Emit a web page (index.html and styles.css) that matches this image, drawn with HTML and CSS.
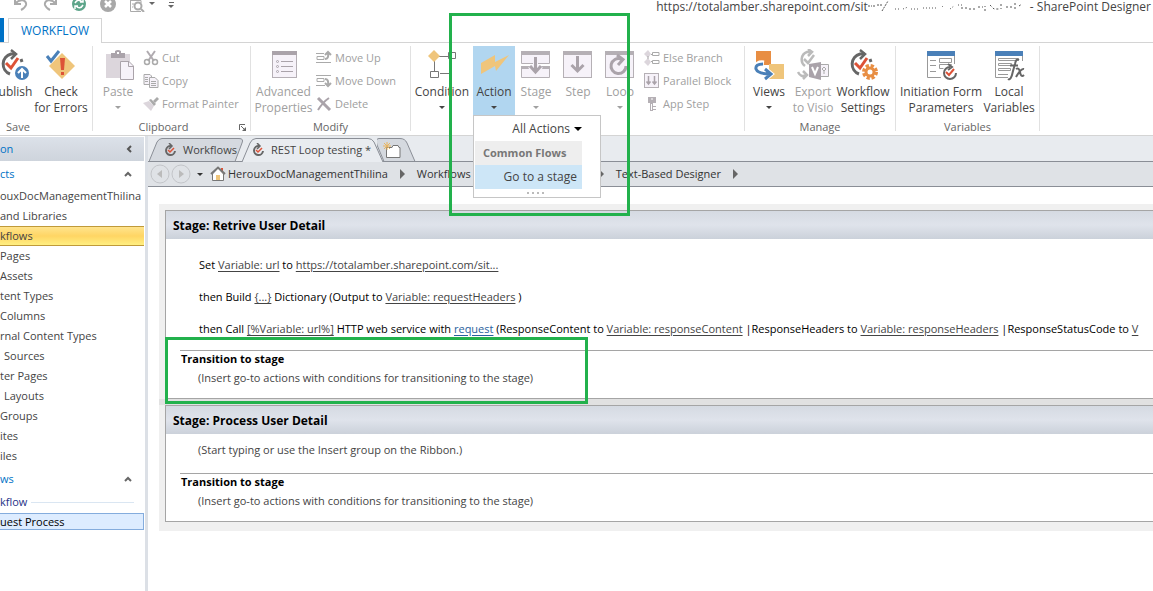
FILE: index.html
```html
<!DOCTYPE html>
<html lang="en">

<head>
  <meta charset="UTF-8">
  <meta name="viewport" content="width=device-width, initial-scale=1.0">
  <title>SharePoint Designer</title>
  <link rel="stylesheet" href="styles.css">
</head>

<body>
  <!-- shared symbols -->
  <svg class="symbols" width="0" height="0" aria-hidden="true">
    <symbol id="cycle" viewBox="0 0 30 30">
      <path d="M10 25A10.500 10.500 0 0 1 11 5H16" fill="none" stroke="currentColor" stroke-width="3" />
      <path d="M11 1L16 5L11 10" fill="none" stroke="currentColor" stroke-width="2.500" />
      <path d="M21 10L22 13" fill="none" stroke="currentColor" stroke-width="3" />
      <path class="tick" d="M6 14L11 19L18 9" fill="none" stroke-width="3" />
    </symbol>
    <symbol id="cycle-small" viewBox="0 0 13 14">
      <path d="M7 3A4.500 4.500 0 1 0 11 8" fill="none" stroke="#666" stroke-width="2" />
      <path d="M5 0L8 3L5 6" fill="none" stroke="#666" stroke-width="1.500" />
      <path d="M4 7L6 9L10 5" fill="none" stroke="#dd5237" stroke-width="1.500" />
    </symbol>
  </svg>

  <header class="titlebar">
    <div class="quick-access">
      <button aria-label="Undo"><svg width="16" height="16" viewBox="0 0 16 16"><path d="M2 3V8H8M2 8C7 2 14 4 13 9Q12 12 8 14" fill="none" stroke="#aaa" stroke-width="2" /></svg></button>
      <button aria-label="Redo"><svg width="16" height="16" viewBox="0 0 16 16"><path d="M14 3V8H8M14 8C9 2 2 4 3 9Q4 12 8 14" fill="none" stroke="#aaa" stroke-width="2" /></svg></button>
      <button aria-label="Refresh"><svg width="16" height="16" viewBox="0 0 16 16"><circle cx="8" cy="8" r="7" fill="#5da58a" /><path d="M4 7Q7 2 11 6M12 3V6H9M12 9Q9 14 5 10M4 13V10H7" fill="none" stroke="#fff" stroke-width="1.500" /></svg></button>
      <button aria-label="Stop"><svg width="16" height="16" viewBox="0 0 16 16"><circle cx="8" cy="8" r="8" fill="#a8a8a8" /><path d="M5 5L11 11M11 5L5 11" stroke="#fff" stroke-width="2.500" /></svg></button>
      <button aria-label="Preview"><svg width="26" height="16" viewBox="0 0 26 16"><path d="M1.500 0V15.500H12M1 4.500H12V7" fill="none" stroke="#aaa" /><circle cx="9" cy="10" r="3.500" fill="#fff" stroke="#aaa" stroke-width="2" /><path d="M12 13L15 16" stroke="#aaa" stroke-width="2" /><path d="M3 8H5M3 11H4" stroke="#aaa" /><path d="M20 6H26L23 9Z" fill="#666" /></svg></button>
      <button aria-label="Customize"><svg width="7" height="16" viewBox="0 0 7 16"><path d="M1 6.500H6" stroke="#666" /><path d="M0 9H6L3 12Z" fill="#666" /></svg></button>
    </div>
    <div class="window-title">
      <span>https://totalamber.sharepoint.com/sit</span>
      <svg width="162" height="14" viewBox="0 0 162 14" fill="none" stroke="#555"><path d="M0 6H4M6 5V8M9 5H14M14 11L20 1" stroke-dasharray="2 1" /><path d="M27 9H32M35 9L40 7M43 9H52M55 8H68M74 6L76 8M82 9L86 6M90 5H95" stroke-dasharray="1 2" /><path d="M93 8H99M101 9H107M110 7H115M117 11V6M122 5L126 9H131M133 4V9M138 7H144M147 3V9M151 6L154 4" stroke-dasharray="2 2" /></svg>
      <span>- SharePoint Designer</span>
    </div>
  </header>

  <nav class="ribbon-tabs">
    <span class="file-tab"></span>
    <a class="ribbon-tab" href="#">WORKFLOW</a>
  </nav>

  <section class="ribbon">
    <div class="group group-save">
      <div class="tools">
        <button class="large publish">
          <svg width="32" height="32" viewBox="0 0 32 32"><use href="#cycle" width="30" height="30" /><circle cx="22" cy="24" r="7" fill="#4a80b8" /><path d="M22 29V20M18 24L22 20L26 24" fill="none" stroke="#fff" stroke-width="2" /></svg>
          <span>ublish</span>
        </button>
        <button class="large check">
          <svg width="32" height="32" viewBox="0 0 32 32"><path d="M17 4L30 17L17 30L4 17Z" fill="#efc57b" /><path d="M2 7L6 12L14 2" fill="none" stroke="#4a80b8" stroke-width="3" /><path d="M15 9H20L19 21H16Z" fill="#dd5237" /><rect x="16" y="23" width="3" height="3" fill="#dd5237" /></svg>
          <span>Check<br>for Errors</span>
        </button>
      </div>
      <div class="group-name">Save</div>
    </div>

    <div class="group group-clipboard">
      <div class="tools">
        <button class="large paste" disabled>
          <svg width="32" height="32" viewBox="0 0 32 32"><path d="M4 5H28V29H4Z" fill="#dcd6dc" /><path d="M9 4H13V2Q16 0 19 2V4H23V9H9Z" fill="#aaa3aa" /><rect x="15" y="3" width="2" height="2" fill="#fff" /><path d="M18.500 12.500H27L31.500 17V30.500H18.500Z" fill="#f6f2f9" stroke="#aaa3aa" /><path d="M26.500 12.500V17.500H31.500" fill="none" stroke="#aaa3aa" /></svg>
          <span>Paste</span><i class="arrow"></i>
        </button>
        <div class="stack">
          <button class="small" disabled><svg width="16" height="16" viewBox="0 0 16 16"><path d="M4 1L11 11M12 1L5 11" stroke="#b0abb0" stroke-width="2" /><circle cx="4" cy="12" r="2.500" fill="none" stroke="#aaa" stroke-width="1.500" /><circle cx="12" cy="12" r="2.500" fill="none" stroke="#aaa" stroke-width="1.500" /></svg>Cut</button>
          <button class="small" disabled><svg width="16" height="16" viewBox="0 0 16 16"><path d="M1 1.500H7L8.500 3V11.500H1Z" fill="#f6f2f9" stroke="#aaa" /><path d="M6.500 4.500H12L15 7.500V14.500H6.500Z" fill="#f6f2f9" stroke="#aaa" /><path d="M2 4.500H5M2 6.500H5M2 8.500H5M8 8.500H13M8 10.500H13M8 12.500H13" stroke="#aaa" /></svg>Copy</button>
          <button class="small" disabled><svg width="16" height="16" viewBox="0 0 16 16"><path d="M0 7L6 5L11 10L8 15Z" fill="#dcd6dc" /><path d="M6 4L8 3L13 8L11 10Z" fill="#aaa" /><path d="M10 5L14 1L16 3L12 7Z" fill="#aaa" /></svg>Format Painter</button>
        </div>
      </div>
      <div class="group-name">Clipboard</div>
      <button class="launcher" aria-label="Clipboard options"><svg width="7" height="7" viewBox="0 0 7 7"><path d="M0.500 6V0.500H6M2 2L5 5" fill="none" stroke="#666" /><path d="M7 3V7H3Z" fill="#666" /></svg></button>
    </div>

    <div class="group group-modify">
      <div class="tools">
        <button class="large advanced" disabled>
          <svg width="32" height="32" viewBox="0 0 32 32"><rect x="4.500" y="2.500" width="24" height="26" fill="#f6f2f9" stroke="#b5afb5" /><path d="M4 2H29V6H4Z" fill="#aaa3aa" /><path d="M13 12.500H25M13 17.500H25M13 22.500H25" stroke="#aaa3aa" /><g fill="none" stroke="#aaa3aa"><circle cx="9.500" cy="12.500" r="1" /><circle cx="9.500" cy="17.500" r="1" /><circle cx="9.500" cy="22.500" r="1" /></g></svg>
          <span>Advanced<br>Properties</span>
        </button>
        <div class="stack">
          <button class="small" disabled><svg width="16" height="16" viewBox="0 0 16 16"><path d="M0 3.500H8M0 12.500H15M1 6.500H8V9.500H1Z" fill="none" stroke="#aaa" /><path d="M9 9Q13 9 12 3M9 5L12 2L15 5" fill="none" stroke="#aaa" stroke-width="2" /></svg>Move Up</button>
          <button class="small" disabled><svg width="16" height="16" viewBox="0 0 16 16"><path d="M0 2.500H15M0 12.500H9M1 5.500H8V8.500H1Z" fill="none" stroke="#aaa" /><path d="M9 6Q13 6 12 12M9 10L12 13L15 10" fill="none" stroke="#aaa" stroke-width="2" /></svg>Move Down</button>
          <button class="small" disabled><svg width="16" height="16" viewBox="0 0 16 16"><path d="M2 2L14 14" stroke="#aaa3aa" stroke-width="3" /><path d="M13 2Q7 6 2 14" fill="none" stroke="#aaa3aa" stroke-width="2" /></svg>Delete</button>
        </div>
      </div>
      <div class="group-name">Modify</div>
    </div>

    <div class="group group-insert">
      <div class="tools">
        <button class="large condition">
          <svg width="32" height="32" viewBox="0 0 32 32"><path d="M8.500 7V22M8 7.500H24M25.500 10V29M14 24.500H25" fill="none" stroke="#777" /><path d="M8 1L14 7L8 13L2 7Z" fill="#efc57b" /><path d="M22.500 3.500H29.500V9.500H22.500ZM4.500 22.500H12.500V28.500H4.500Z" fill="#fff" stroke="#777" /></svg>
          <span>Condition</span><i class="arrow"></i>
        </button>
        <div class="dropdown">
          <button class="large action active">
            <svg width="32" height="32" viewBox="0 0 32 32"><path d="M3 14L17 6V13L31 6L18 22L17 17L3 25Z" fill="#efc57b" /></svg>
            <span>Action</span><i class="arrow"></i>
          </button>
          <div class="menu">
            <button class="menu-all">All Actions <i class="arrow"></i></button>
            <div class="menu-heading">Common Flows</div>
            <button class="menu-item">Go to a stage</button>
            <svg class="grip" width="18" height="2" viewBox="0 0 18 2"><path d="M0 1H2M5 1H7M10 1H12M15 1H17" stroke="#bbb" stroke-width="2" /></svg>
          </div>
        </div>
        <button class="large block" disabled>
          <svg width="32" height="32" viewBox="0 0 32 32"><path d="M1.500 2.500H29.500V14.500H1.500ZM1.500 17.500H29.500V28.500H1.500Z" fill="#f6f2f9" stroke="#b5b0b5" /><path d="M1 2H30V6H1ZM1 17H30V20H1Z" fill="#b5b0b5" /><path d="M15.500 8V23M10 17L15.500 23L21 17" fill="none" stroke="#f6f2f9" stroke-width="5" /><path d="M15.500 8V23M10 17L15.500 23L21 17" fill="none" stroke="#aaa3aa" stroke-width="3" /></svg>
          <span>Stage</span><i class="arrow"></i>
        </button>
        <button class="large block" disabled>
          <svg width="32" height="32" viewBox="0 0 32 32"><rect x="1.500" y="2.500" width="28" height="26" fill="#f6f2f9" stroke="#b5b0b5" /><path d="M1 2H30V6H1Z" fill="#b5b0b5" /><path d="M15.500 7V22M9.500 16L15.500 22L21.500 16" fill="none" stroke="#aaa3aa" stroke-width="3" /></svg>
          <span>Step</span>
        </button>
        <button class="large block" disabled>
          <svg width="32" height="32" viewBox="0 0 32 32"><rect x="1.500" y="2.500" width="28" height="26" fill="#f6f2f9" stroke="#b5b0b5" /><path d="M1 2H30V6H1Z" fill="#b5b0b5" /><path d="M17 10A7.500 7.500 0 1 0 22 17M13 6L19 10.500L14 16" fill="none" stroke="#aaa3aa" stroke-width="3" /></svg>
          <span>Loop</span><i class="arrow"></i>
        </button>
        <div class="stack stack-branch">
          <button class="small" disabled><svg width="16" height="16" viewBox="0 0 16 16"><path d="M4 0L7 4L4 8L0 4ZM4 8L7 12L4 16L0 12Z" fill="#dcd6dc" /><path d="M4 6V9M7 4.500H9M7 11.500H9M8.500 2.500H15V5.500H8.500ZM8.500 10.500H15V13.500H8.500Z" fill="none" stroke="#aaa" /></svg>Else Branch</button>
          <button class="small" disabled><svg width="16" height="16" viewBox="0 0 16 16"><rect x="0.500" y="0.500" width="14" height="14" fill="#f6f2f9" stroke="#b5b0b5" /><path d="M4.500 3V11M2.500 8.500L4.500 11L6.500 8.500M10.500 3V11M8.500 8.500L10.500 11L12.500 8.500" fill="none" stroke="#aaa3aa" stroke-width="1.500" /></svg>Parallel Block</button>
          <button class="small" disabled><svg width="16" height="16" viewBox="0 0 16 16"><path d="M4 1H12V7H9V15H6V7H4Z" fill="#b5b0b5" /><path d="M7 3H9M7.500 8V14" stroke="#fff" /><path d="M9 10.500H12M9 13.500H12" stroke="#b5b0b5" /></svg>App Step</button>
        </div>
      </div>
    </div>

    <div class="group group-manage">
      <div class="tools">
        <button class="large views">
          <svg width="32" height="32" viewBox="0 0 32 32"><path d="M3 2H18V16H3Z" fill="#e88e43" /><path d="M16 15H31V30H16Z" fill="#efc57b" /><path d="M11 14Q3 13 3 19Q3 26 17 25M12 20L18 25L12 30" fill="none" stroke="#fff" stroke-width="5" /><path d="M10 15Q2 15 3 20Q5 25 17 25M12 20L18 25L12 30" fill="none" stroke="#4a80b8" stroke-width="3" /></svg>
          <span>Views</span><i class="arrow"></i>
        </button>
        <button class="large export" disabled>
          <svg width="32" height="32" viewBox="0 0 32 32"><path d="M8 17A8 8 0 0 1 10 3H15M11 0L15 3L11 7M7 10L11 14L17 6M1 23Q4 29 9 26M6 22L10 26L6 30" fill="none" stroke="#bbb" stroke-width="2.500" /><path d="M24 15.500H31.500V27.500H24" fill="#f6f2f9" stroke="#aaa" /><path d="M12 15L24 13V31L12 28Z" fill="#aaa3aa" /><path d="M15 18L18 25L21 18" fill="none" stroke="#fff" stroke-width="2" /><path d="M27 18L29 20L27 22L25 20ZM27 22V25" fill="none" stroke="#aaa" /></svg>
          <span>Export<br>to Visio</span>
        </button>
        <button class="large settings">
          <svg width="32" height="32" viewBox="0 0 32 32"><use href="#cycle" x="2" width="30" height="30" /><circle cx="23" cy="23" r="6" fill="#fff" stroke="#e88e43" stroke-width="4" stroke-dasharray="3 1.700" /><circle cx="23" cy="23" r="4" fill="#fff" stroke="#e88e43" stroke-width="3" /></svg>
          <span>Workflow<br>Settings</span>
        </button>
      </div>
      <div class="group-name">Manage</div>
    </div>

    <div class="group group-variables">
      <div class="tools">
        <button class="large initiation">
          <svg width="32" height="32" viewBox="0 0 32 32"><path d="M2.500 3V28.500H16M29.500 3V15" fill="none" stroke="#999" /><path d="M2 2H30V7H2Z" fill="#4a80b8" /><path d="M5 11.500H11M5 16.500H11M5 22.500H11M14.500 9.500H26.500V13.500H14.500ZM14.500 15.500H26.500V19.500H14.500Z" fill="none" stroke="#999" /><circle cx="25" cy="24" r="8" fill="#fff" /><path d="M25 18A6 6 0 1 0 31 24" fill="none" stroke="#666" stroke-width="2" /><path d="M23 15L27 18L23 21" fill="none" stroke="#666" stroke-width="2" /><path d="M21 23L24 26L29 20" fill="none" stroke="#dd5237" stroke-width="2" /></svg>
          <span>Initiation Form<br>Parameters</span>
        </button>
        <button class="large local">
          <svg width="32" height="32" viewBox="0 0 32 32"><path d="M2.500 3V28.500H15M29.500 3V12" fill="none" stroke="#999" /><path d="M2 2H30V7H2Z" fill="#4a80b8" /><path d="M5.500 9.500H25.500V11.500H5.500ZM5.500 14.500H18.500V16.500H5.500ZM5.500 19.500H17.500V21.500H5.500ZM5 25.500H15" fill="none" stroke="#999" /><path d="M15 30Q18 32 20 22L22 15Q23 9 26 11M17 16.500H25M23 20Q26 18 27 23Q28 29 31 26M31 20Q28 19 23 28" fill="none" stroke="#666" stroke-width="2" /></svg>
          <span>Local<br>Variables</span>
        </button>
      </div>
      <div class="group-name">Variables</div>
    </div>
  </section>

  <div class="workspace">
    <aside class="sidebar">
      <div class="pane-title">on<svg width="6" height="8" viewBox="0 0 6 8"><path d="M5 1L2 4L5 7" fill="none" stroke="#555" stroke-width="2" /></svg></div>
      <div class="section-title">cts<svg width="8" height="6" viewBox="0 0 8 6"><path d="M1 5L4 2L7 5" fill="none" stroke="#666" stroke-width="2" /></svg></div>
      <nav class="tree">
        <a href="#">ouxDocManagementThilina</a>
        <a href="#">and Libraries</a>
        <a class="selected" href="#">kflows</a>
        <a href="#">Pages</a>
        <a href="#">Assets</a>
        <a href="#">tent Types</a>
        <a href="#">Columns</a>
        <a href="#">rnal Content Types</a>
        <a class="indent" href="#">Sources</a>
        <a href="#">ter Pages</a>
        <a class="indent" href="#">Layouts</a>
        <a href="#">Groups</a>
        <a href="#">ites</a>
        <a href="#">iles</a>
      </nav>
      <div class="section-title">ws<svg width="8" height="6" viewBox="0 0 8 6"><path d="M1 5L4 2L7 5" fill="none" stroke="#666" stroke-width="2" /></svg></div>
      <div class="list-title">kflow</div>
      <a class="current" href="#">uest Process</a>
    </aside>

    <main class="editor">
      <div class="doc-tabs">
        <button class="doc-tab tab-list">
          <svg class="shape" width="98" height="24" viewBox="0 0 98 24"><path d="M0 23.500L8 4Q10 0.500 13 0.500H90Q95 0.500 93 5L86 23.500Z" fill="#d5d9df" stroke="#8a8e96" /></svg>
          <svg width="13" height="14"><use href="#cycle-small" /></svg>Workflows
        </button>
        <button class="doc-tab tab-open">
          <svg class="shape" width="142" height="25" viewBox="0 0 142 25"><path d="M0 24L8 5Q10 0.500 14 0.500H126Q130 0.500 132 4L141 24" fill="#e9ecf0" stroke="#8a8e96" /></svg>
          <svg width="13" height="14"><use href="#cycle-small" /></svg>REST Loop testing *
        </button>
        <button class="doc-tab tab-new" aria-label="New tab">
          <svg class="shape" width="42" height="24" viewBox="0 0 42 24"><path d="M7 23.500L0 7Q-2 0.500 2 0.500H23Q28 0.500 30 5L38 23.500Z" fill="#d5d9df" stroke="#8a8e96" /></svg>
          <svg width="18" height="16" viewBox="0 0 18 16"><path d="M3.500 5.500H9L10 3.500H15L16 5.500H17V15.500H3.500Z" fill="#fff" stroke="#777" /><path d="M4 0V8M0 4H8M1 1L7 7M7 1L1 7" stroke="#e9b55f" /></svg>
        </button>
      </div>

      <nav class="breadcrumb">
        <button aria-label="Back"><svg width="20" height="20" viewBox="0 0 20 20"><circle cx="10" cy="10" r="9" fill="none" stroke="#c3c5c9" /><path d="M12 6V14L7 10Z" fill="#bbb" /></svg></button>
        <button aria-label="Forward"><svg width="20" height="20" viewBox="0 0 20 20"><circle cx="10" cy="10" r="9" fill="none" stroke="#c3c5c9" /><path d="M8 6V14L13 10Z" fill="#bbb" /></svg></button>
        <i class="arrow"></i>
        <a class="crumb-home" href="#"><svg width="16" height="16" viewBox="0 0 16 16"><path d="M11 2H13V6H11Z" fill="#dd5237" /><path d="M2.500 8V14.500H13.500V8L8 2Z" fill="#fff" stroke="#777" /><path d="M1 8L8 1.500L15 8" fill="none" stroke="#777" stroke-width="2" /><path d="M6 9H10V14H6Z" fill="#efc57b" /></svg>HerouxDocManagementThilina</a>
        <i class="caret"></i>
        <a class="crumb-list" href="#">Workflows</a>
        <i class="caret"></i>
        <a href="#">Text-Based Designer</a>
        <i class="caret"></i>
      </nav>

      <div class="canvas">
        <section class="stage">
          <h2>Stage: Retrive User Detail</h2>
          <p class="step">Set <a href="#">Variable: url</a> to <a href="#">https://totalamber.sharepoint.com/sit...</a></p>
          <p class="step">then Build <a href="#">{...}</a> Dictionary (Output to <a href="#">Variable: requestHeaders</a> )</p>
          <p class="step">then Call <a href="#">[%Variable: url%]</a> HTTP web service with <a class="request" href="#">request</a> (ResponseContent to <a href="#">Variable: responseContent</a> |ResponseHeaders to <a href="#">Variable: responseHeaders</a> |ResponseStatusCode to <a href="#">V</a></p>
          <div class="transition">
            <h3>Transition to stage</h3>
            <p>(Insert go-to actions with conditions for transitioning to the stage)</p>
          </div>
        </section>
        <div class="stage-gap"></div>
        <section class="stage">
          <h2>Stage: Process User Detail</h2>
          <p class="hint">(Start typing or use the Insert group on the Ribbon.)</p>
          <div class="transition">
            <h3>Transition to stage</h3>
            <p>(Insert go-to actions with conditions for transitioning to the stage)</p>
          </div>
        </section>
      </div>
    </main>
  </div>

  <!-- callouts over the screen -->
  <div class="callout callout-action"></div>
  <div class="callout callout-transition"></div>
</body>

</html>
```
FILE: styles.css
```css
:root {
  --text: #444;
  --disabled: #a0a0a0;
  --blue: #0072c6;
  --line: #d4d4d4;
  --frame: #8a8e96;
}

* {
  margin: 0;
  padding: 0;
  box-sizing: border-box;
}

body {
  position: relative;
  display: flex;
  flex-direction: column;
  min-height: 100vh;
  overflow: hidden;
  background: #fff;
  color: var(--text);
  font-family: 'Open Sans', 'Noto Sans', sans-serif;
  font-size: 12px;
  line-height: 16px;
}

button {
  border: none;
  background: none;
  color: inherit;
  font: inherit;
}

button:disabled {
  color: var(--disabled);
}

a {
  color: inherit;
  text-decoration: none;
}

svg {
  flex: none;
}

.symbols {
  position: absolute;
}

.tick {
  stroke: #dd5237;
}

.arrow {
  border: 3px solid transparent;
  border-top-color: currentColor;
  border-bottom: none;
}

/* title bar */
.titlebar {
  display: flex;
  justify-content: space-between;
  height: 18px;
}

.quick-access {
  display: flex;
  align-items: flex-start;
  gap: 13px;
  height: 14px;
  padding-left: 13px;
  overflow: hidden;
}

.quick-access svg {
  display: block;
  margin-top: -4px;
}

.window-title {
  display: flex;
  flex: none;
  padding-right: 2px;
  line-height: 14px;
}

/* ribbon */
.ribbon-tabs {
  display: flex;
  height: 25px;
  border-bottom: 1px solid var(--line);
}

.file-tab {
  width: 4px;
  margin-right: 4px;
  background: var(--blue);
}

.ribbon-tab {
  height: 25px;
  padding: 0 12px;
  border: 1px solid var(--line);
  border-bottom: none;
  background: #fff;
  color: var(--blue);
  line-height: 24px;
}

.ribbon {
  display: flex;
  height: 93px;
  border-bottom: 1px solid var(--line);
}

.group {
  position: relative;
  display: flex;
  flex: none;
  flex-direction: column;
  justify-content: space-between;
  margin: 3px 0 4px;
  border-right: 1px solid #e1e1e1;
}

.group-save { width: 93px; }
.group-clipboard { width: 158px; }
.group-modify { width: 160px; }
.group-insert { width: 334px; }
.group-manage { width: 151px; }
.group-variables { width: 144px; }

.group-name {
  color: #666;
  font-size: 11px;
  line-height: 8px;
  text-align: center;
}

.group-save .group-name {
  padding-right: 56px;
}

.group-clipboard .group-name {
  padding-right: 16px;
}

.tools {
  display: flex;
  white-space: nowrap;
}

.large {
  display: flex;
  flex: none;
  flex-direction: column;
  align-items: center;
  height: 69px;
  padding-top: 3px;
}

.large svg {
  color: #666;
}

.large span {
  margin-top: 3px;
}

.large .arrow {
  margin-top: 6px;
}

.large.active {
  background: #b1d6f0;
}

.publish { width: 31px; }
.check { width: 60px; }
.paste { width: 50px; }
.advanced { width: 65px; }
.condition { width: 62px; }
.action,
.block { width: 42px; }
.views { width: 48px; }
.export { width: 40px; }
.settings { width: 60px; }
.initiation { width: 90px; }
.local { width: 46px; }

.stack {
  display: flex;
  flex-direction: column;
}

.stack-branch {
  padding-left: 3px;
}

.small {
  display: flex;
  align-items: center;
  gap: 3px;
  height: 23px;
  font-size: 11px;
}

.launcher {
  position: absolute;
  right: 4px;
  bottom: 0;
  line-height: 7px;
}

.dropdown {
  position: relative;
}

.menu {
  position: absolute;
  top: 69px;
  left: 0;
  z-index: 2;
  display: flex;
  flex-direction: column;
  width: 128px;
  height: 83px;
  padding: 1px 18px 0 1px;
  border: 1px solid #c6c6c6;
  background: #fff;
}

.menu-all,
.menu-item,
.menu-heading {
  height: 24px;
  line-height: 24px;
}

.menu-all {
  display: flex;
  align-items: center;
  justify-content: flex-end;
  gap: 4px;
}

.menu-all .arrow {
  border-width: 4px 4px 0;
  border-top-color: #000;
}

.menu-heading {
  padding-left: 8px;
  background: #eee;
  color: #777;
  font-size: 11px;
  font-weight: bold;
}

.menu-item {
  padding-right: 5px;
  background: #cde6f7;
  text-align: right;
}

.grip {
  margin: 3px 0 0 52px;
}

/* navigation pane */
.workspace {
  display: flex;
  flex: 1;
  background: #e8ebef;
}

.sidebar {
  flex: none;
  width: 145px;
  padding-right: 1px;
  border-top: 1px solid #fff;
  background: #fff;
  font-size: 11px;
}

.pane-title,
.section-title {
  display: flex;
  align-items: center;
  justify-content: space-between;
  height: 25px;
  padding-right: 12px;
  color: var(--blue);
}

.pane-title {
  height: 24px;
  background: linear-gradient(#dce1e9, #ced4dc);
}

.tree a {
  display: block;
  height: 20px;
  line-height: 20px;
}

.tree .indent {
  padding-left: 4px;
}

.tree .selected {
  border: solid #c09a3a;
  border-width: 1px 0;
  background: linear-gradient(#ffe48d, #ffd564 50%, #ffef81);
  line-height: 18px;
}

.list-title {
  display: flex;
  align-items: center;
  gap: 4px;
  height: 22px;
  padding-right: 10px;
  color: #1e3287;
}

.list-title::after {
  content: '';
  flex: 1;
  height: 1px;
  background: #dae6f2;
}

.current {
  display: block;
  height: 17px;
  border: 1px solid #84acdd;
  border-left: none;
  background: #ddecff;
  color: #000;
  line-height: 15px;
}

/* editor */
.editor {
  flex: 1;
  min-width: 0;
  border-left: 3px solid #dce0e6;
  background: #fff;
}

.doc-tabs {
  display: flex;
  height: 26px;
  padding: 2px 0 0 1px;
  border-bottom: 1px solid var(--frame);
  background: #e8ebef;
}

.doc-tab {
  position: relative;
  z-index: 0;
  display: flex;
  align-items: center;
  gap: 6px;
  height: 24px;
  font-size: 11px;
  white-space: nowrap;
}

.shape {
  position: absolute;
  top: 0;
  left: 0;
  z-index: -1;
}

.tab-list {
  width: 93px;
  padding-left: 15px;
}

.tab-open {
  z-index: 1;
  width: 135px;
  padding-left: 10px;
}

.tab-new {
  width: 42px;
  padding-left: 6px;
}

.breadcrumb {
  display: flex;
  align-items: center;
  height: 25px;
  padding-left: 2px;
  border-bottom: 1px solid var(--frame);
  background: #dfe2e6;
  color: #333;
  font-size: 11px;
  white-space: nowrap;
}

.breadcrumb button {
  height: 20px;
  margin-right: 1px;
}

.breadcrumb .arrow {
  margin: 0 7px 0 5px;
}

.crumb-home {
  display: flex;
  align-items: center;
  gap: 2px;
}

.caret {
  margin: 0 12px;
  border: 5px solid transparent;
  border-left-color: #666;
  border-right: none;
}

.crumb-list {
  margin-right: 116px;
}

.canvas {
  margin: 17px 0 0 11px;
  padding: 6px 0 9px 6px;
  background: #f0f0f0;
}

.stage {
  border: 1px solid #a5a5a5;
  border-right: none;
  background: #fff;
  color: #000;
  font-size: 11px;
  white-space: nowrap;
  overflow: hidden;
}

.stage h2 {
  height: 28px;
  margin-bottom: 10px;
  padding-left: 7px;
  background: linear-gradient(#d5dae2, #dfe3eb 50%, #cbd1da);
  font-size: 12px;
  line-height: 30px;
}

.step {
  padding-left: 33px;
  line-height: 32px;
}

.step a {
  color: #444;
  text-decoration: underline;
  text-underline-offset: 2px;
}

.step .request {
  color: #2a5f9e;
}

.transition {
  height: 48px;
  margin: 5px 0 0 14px;
  border-top: 1px solid #a5a5a5;
}

.transition h3 {
  padding-left: 1px;
  font-size: 11px;
  line-height: 16px;
}

.transition p {
  padding-left: 18px;
  color: var(--text);
  line-height: 22px;
}

.hint {
  padding: 0 0 12px 32px;
  color: var(--text);
  line-height: 12px;
}

.stage-gap {
  height: 6px;
  margin-left: -6px;
  background: #e1e1e1;
}

.callout {
  position: absolute;
  z-index: 5;
  border: 3px solid #22b14c;
  pointer-events: none;
}

.callout-action {
  top: 13px;
  left: 449px;
  width: 181px;
  height: 203px;
}

.callout-transition {
  top: 337px;
  left: 165px;
  width: 423px;
  height: 67px;
}
```
